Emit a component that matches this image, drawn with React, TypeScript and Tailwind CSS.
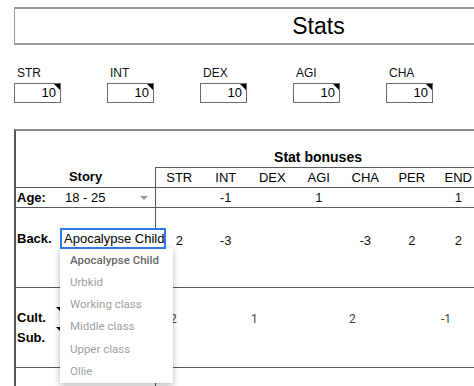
import React from 'react';

const STATS = ['STR', 'INT', 'DEX', 'AGI', 'CHA'];
const COLS = ['STR', 'INT', 'DEX', 'AGI', 'CHA', 'PER', 'END'];

const AGE = ['', '-1', '', '1', '', '', '1'];
const BACK = ['2', '-3', '', '', '-3', '2', '2'];

const OPTIONS = ['Apocalypse Child', 'Urbkid', 'Working class', 'Middle class', 'Upper class', 'Ollie'];

// little black corner flag, like a cell note
const Note = ({ className }: { className: string }) => (
  <div
    className={`absolute w-0 h-0 border-t-[6px] border-l-[6px] border-t-black border-l-transparent ${className}`}
  />
);

const StatInput = ({ label }: { label: string }) => (
  <div className="w-[93px] shrink-0">
    <div className="pl-[3px] text-[12px] leading-[14px] text-[#111]">{label}</div>
    <div className="relative mt-[3px] w-[47px] h-[20px] border border-[#6b6b6b] flex items-center justify-end pr-[4px] text-[13px]">
      10
      <Note className="top-0 right-0" />
    </div>
  </div>
);

const ValueGrid = ({ values }: { values: string[] }) => (
  <div className="grid grid-cols-[repeat(7,46.5px)] text-[13px] text-[#111]">
    {values.map((v, i) => (
      <div key={i} className="text-center">{v}</div>
    ))}
  </div>
);

export default function App() {
  return (
    <div
      className="relative w-[474px] h-[386px] overflow-hidden bg-white text-black"
      style={{ fontFamily: '"Liberation Sans", Arial, sans-serif' }}
    >
      {/* Title */}
      <div className="ml-[14px] mt-[7px] w-[608px] h-[38px] border-t-2 border-b-2 border-l border-[#9a9a9a] flex items-center justify-center text-[23px]">
        Stats
      </div>

      {/* Base stats */}
      <div className="flex ml-[14px] mt-[21px]">
        {STATS.map((s) => (
          <StatInput key={s} label={s} />
        ))}
      </div>

      {/* Table */}
      <div className="ml-[14px] mt-[26px] w-[500px] border-t-2 border-t-[#8c8c8c] border-l-2 border-l-[#555]">
        {/* header */}
        <div className="flex h-[56px]">
          <div className="w-[139px] shrink-0 flex items-end justify-center pb-[1px] text-[13px] font-bold leading-[18px]">
            Story
          </div>
          <div className="flex-1 flex flex-col">
            <div className="h-[37px] border-b border-[#5a5a5a] w-[326px] flex items-end justify-center pb-[1px] text-[14px] font-bold leading-[18px]">
              Stat bonuses
            </div>
            <div className="flex-1 border-l border-[#5a5a5a] grid grid-cols-[repeat(7,46.5px)] items-center text-[13px]">
              {COLS.map((c) => (
                <div key={c} className="text-center">{c}</div>
              ))}
            </div>
          </div>
        </div>

        {/* Age */}
        <div className="flex h-[20px] border-t border-[#5a5a5a]">
          <div className="w-[139px] shrink-0 flex items-center pl-[1px] text-[13px]">
            <span className="font-bold w-[48px] shrink-0">Age:</span>
            <span>18 - 25</span>
            <span className="ml-auto mr-[7px] w-0 h-0 border-t-[4px] border-x-[4px] border-t-[#9a9a9a] border-x-transparent" />
          </div>
          <div className="flex-1 border-l border-[#5a5a5a] flex items-center">
            <ValueGrid values={AGE} />
          </div>
        </div>

        {/* Background */}
        <div className="flex h-[80px] border-t border-[#5a5a5a]">
          <div className="w-[139px] shrink-0 flex items-center self-start mt-[20px] pl-[1px] text-[13px]">
            <span className="font-bold w-[43px] shrink-0">Back.</span>
            <div className="relative z-10 w-[106px] h-[21px] shrink-0 overflow-hidden whitespace-nowrap border-2 border-[#2f7ae5] bg-white flex items-center pl-[2px] text-[13px]">
              Apocalypse Child
              <span className="ml-[1px] w-px h-[15px] shrink-0 bg-black" />
            </div>
          </div>
          <div className="flex-1 border-l border-[#5a5a5a] pt-[23px]">
            <ValueGrid values={BACK} />
          </div>
        </div>

        {/* Culture / Sub */}
        <div className="flex h-[80px] border-t border-[#5a5a5a]">
          <div className="relative w-[139px] shrink-0 flex flex-col justify-center pl-[1px] text-[13px] font-bold leading-[20px]">
            <span>Cult.</span>
            <span>Sub.</span>
            <Note className="top-[19px] left-[40px]" />
            <Note className="top-[39px] left-[40px]" />
          </div>
          <div
            className="flex-1 border-l border-[#5a5a5a] relative text-[12px] text-[#444]"
            style={{ fontFamily: 'Roboto, "Liberation Sans", sans-serif' }}
          >
            <span className="absolute top-[22px] left-[14px]">2</span>
            <span className="absolute top-[22px] left-[95px]">1</span>
            <span className="absolute top-[22px] left-[193px]">2</span>
            <span className="absolute top-[22px] left-[285px]">-1</span>
          </div>
        </div>

        {/* next row */}
        <div className="flex h-[30px] border-t border-[#5a5a5a]">
          <div className="w-[139px] shrink-0" />
          <div className="flex-1 border-l border-[#5a5a5a]" />
        </div>
      </div>

      {/* Dropdown for Back. */}
      <div
        className="absolute left-[60px] top-[248px] w-[113px] h-[135px] bg-white shadow-[0_2px_6px_rgba(0,0,0,0.3)] pt-[1px] text-[11.5px]"
        style={{ fontFamily: 'Roboto, "Liberation Sans", sans-serif' }}
      >
        {OPTIONS.map((o, i) => (
          <div
            key={o}
            className={`h-[22.3px] flex items-center pl-[10px] whitespace-nowrap ${i === 0 ? 'font-medium text-[#666]' : 'text-[#a0a0a0]'}`}
          >
            {o}
          </div>
        ))}
      </div>
    </div>
  );
}
